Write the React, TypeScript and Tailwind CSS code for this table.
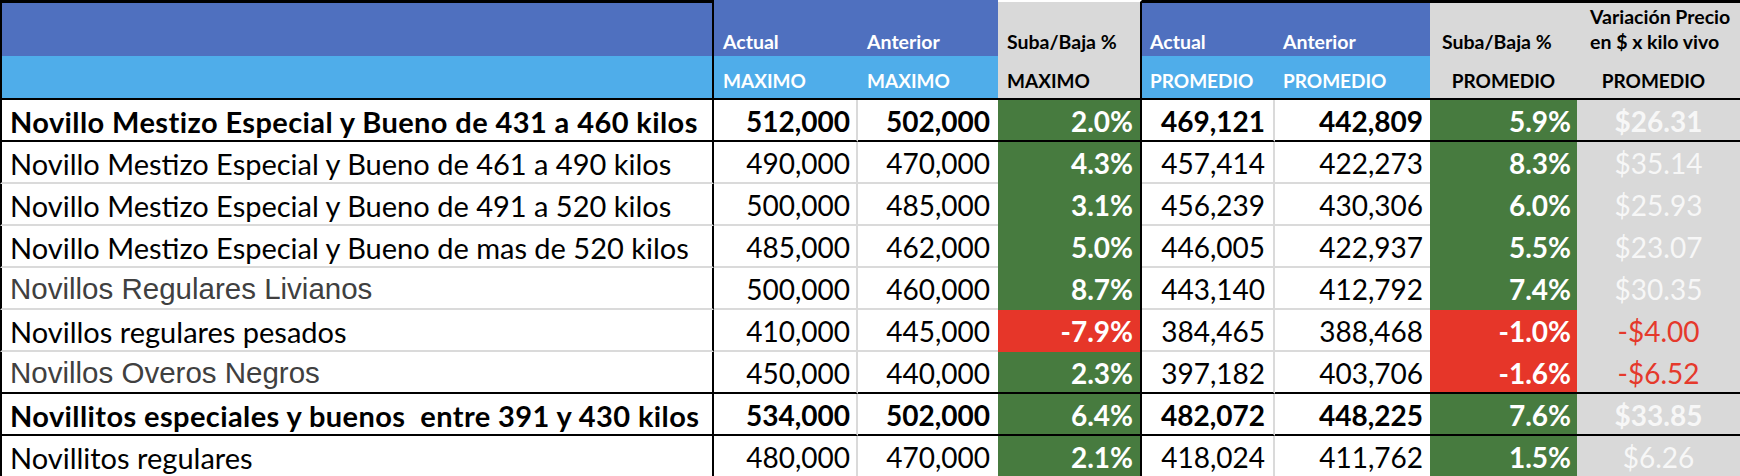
import React from 'react';

type Row = {
  label: string;
  bold?: boolean;
  arial?: boolean;
  maxAct: string;
  maxAnt: string;
  maxPct: string;
  promAct: string;
  promAnt: string;
  promPct: string;
  vari: string;
  sep: 'black' | 'gray';
};

const rows: Row[] = [
  { label: 'Novillo Mestizo Especial y Bueno de 431 a 460 kilos', bold: true, maxAct: '512,000', maxAnt: '502,000', maxPct: '2.0%', promAct: '469,121', promAnt: '442,809', promPct: '5.9%', vari: '$26.31', sep: 'black' },
  { label: 'Novillo Mestizo Especial y Bueno de 461 a 490 kilos', maxAct: '490,000', maxAnt: '470,000', maxPct: '4.3%', promAct: '457,414', promAnt: '422,273', promPct: '8.3%', vari: '$35.14', sep: 'gray' },
  { label: 'Novillo Mestizo Especial y Bueno de 491 a 520 kilos', maxAct: '500,000', maxAnt: '485,000', maxPct: '3.1%', promAct: '456,239', promAnt: '430,306', promPct: '6.0%', vari: '$25.93', sep: 'gray' },
  { label: 'Novillo Mestizo Especial y Bueno de mas de 520 kilos', maxAct: '485,000', maxAnt: '462,000', maxPct: '5.0%', promAct: '446,005', promAnt: '422,937', promPct: '5.5%', vari: '$23.07', sep: 'gray' },
  { label: 'Novillos Regulares Livianos', arial: true, maxAct: '500,000', maxAnt: '460,000', maxPct: '8.7%', promAct: '443,140', promAnt: '412,792', promPct: '7.4%', vari: '$30.35', sep: 'gray' },
  { label: 'Novillos regulares pesados', maxAct: '410,000', maxAnt: '445,000', maxPct: '-7.9%', promAct: '384,465', promAnt: '388,468', promPct: '-1.0%', vari: '-$4.00', sep: 'gray' },
  { label: 'Novillos Overos Negros', arial: true, maxAct: '450,000', maxAnt: '440,000', maxPct: '2.3%', promAct: '397,182', promAnt: '403,706', promPct: '-1.6%', vari: '-$6.52', sep: 'black' },
  { label: 'Novillitos especiales y buenos  entre 391 y 430 kilos', bold: true, maxAct: '534,000', maxAnt: '502,000', maxPct: '6.4%', promAct: '482,072', promAnt: '448,225', promPct: '7.6%', vari: '$33.85', sep: 'black' },
  { label: 'Novillitos regulares', maxAct: '480,000', maxAnt: '470,000', maxPct: '2.1%', promAct: '418,024', promAnt: '411,762', promPct: '1.5%', vari: '$6.26', sep: 'gray' },
];

const grid = 'grid grid-cols-[714px_144px_140px_144px_133px_155px_147px_163px]';

function PctCell({ value, sep, last }: { value: string; sep: string; last?: boolean }) {
  const neg = value.startsWith('-');
  return (
    <div
      className={`flex items-center justify-end border-b-2 pt-[2px] font-bold text-white ${
        neg ? 'bg-[#e63629]' : 'bg-[#477b3f]'
      } ${sep === 'black' ? 'border-black' : 'border-transparent'} ${last ? 'pr-[6px]' : 'pr-[7px]'}`}
    >
      {value}
    </div>
  );
}

export default function App() {
  return (
    <div className="h-[476px] w-[1740px] overflow-hidden bg-white font-['Lato',sans-serif]">
      {/* header, first band */}
      <div className={`${grid} h-[56px] text-[19.5px] font-bold leading-[25px]`}>
        <div className="border-x-2 border-t-[3px] border-black bg-[#4f70bf]" />
        <div className="flex items-end bg-[#4f70bf] pb-[2px] pl-[9px] text-white">Actual</div>
        <div className="flex items-end bg-[#4f70bf] pb-[2px] pl-[9px] text-white">Anterior</div>
        <div className="flex items-end border-r-2 border-t-2 border-r-black border-t-white bg-[#d9d9d9] pb-[2px] pl-[9px] text-black">
          Suba/Baja %
        </div>
        <div className="flex items-end border-t-[3px] border-black bg-[#4f70bf] pb-[2px] pl-[8px] text-white">Actual</div>
        <div className="flex items-end border-t-[3px] border-black bg-[#4f70bf] pb-[2px] pl-[8px] text-white">Anterior</div>
        <div className="flex items-end border-t-[3px] border-black bg-[#d9d9d9] pb-[2px] pl-[12px] text-black">Suba/Baja %</div>
        <div className="flex flex-col justify-end border-t-[3px] border-black bg-[#d9d9d9] pb-[2px] pl-[13px] text-black">
          <span>Variación Precio</span>
          <span>en $ x kilo vivo</span>
        </div>
      </div>

      {/* header, second band */}
      <div className={`${grid} h-[44px] text-[19px] font-bold`}>
        <div className="border-x-2 border-b-2 border-black bg-[#4fadea]" />
        <div className="flex items-end border-b-2 border-black bg-[#4fadea] pb-[3px] pl-[9px] text-white">MAXIMO</div>
        <div className="flex items-end border-b-2 border-black bg-[#4fadea] pb-[3px] pl-[9px] text-white">MAXIMO</div>
        <div className="flex items-end border-b-2 border-r-2 border-black bg-[#d9d9d9] pb-[3px] pl-[9px] text-black">MAXIMO</div>
        <div className="flex items-end border-b-2 border-black bg-[#4fadea] pb-[3px] pl-[8px] text-white">PROMEDIO</div>
        <div className="flex items-end border-b-2 border-black bg-[#4fadea] pb-[3px] pl-[8px] text-white">PROMEDIO</div>
        <div className="flex items-end justify-center border-b-2 border-black bg-[#d9d9d9] pb-[3px] text-black">PROMEDIO</div>
        <div className="flex items-end justify-center border-b-2 border-black bg-[#d9d9d9] pb-[3px] pr-[10px] text-black">
          PROMEDIO
        </div>
      </div>

      {/* body */}
      {rows.map((r) => {
        const line = r.sep === 'black' ? 'border-black' : 'border-[#dadada]';
        const weight = r.bold ? 'font-bold' : 'font-normal';
        const neg = r.vari.startsWith('-');
        const labelStyle = r.arial
          ? "font-['Liberation_Sans',Arial,sans-serif] text-[29.5px] text-[#404040]"
          : r.bold
            ? 'text-[29px] font-bold tracking-[0.4px]'
            : 'text-[29px] font-normal';
        return (
          <div key={r.label} className={`${grid} h-[42px] text-[28px] leading-none text-black`}>
            <div
              className={`flex items-center whitespace-pre border-b-2 border-l-2 border-r-2 border-l-black border-r-black pl-[8px] pt-[2px] ${
                r.sep === 'black' ? 'border-b-black' : 'border-b-[#dadada]'
              } ${labelStyle}`}
            >
              {r.label}
            </div>
            <div className={`flex items-center justify-end border-b-2 border-r-2 border-r-[#dadada] pr-[6px] pt-[2px] ${line} ${weight}`}>
              {r.maxAct}
            </div>
            <div className={`flex items-center justify-end border-b-2 pr-[8px] pt-[2px] ${line} ${weight}`}>{r.maxAnt}</div>
            <div className="grid border-r-2 border-black">
              <PctCell value={r.maxPct} sep={r.sep} />
            </div>
            <div className={`flex items-center justify-end border-b-2 border-r-2 border-r-[#dadada] pr-[8px] pt-[2px] ${line} ${weight}`}>
              {r.promAct}
            </div>
            <div className={`flex items-center justify-end border-b-2 pr-[7px] pt-[2px] ${line} ${weight}`}>{r.promAnt}</div>
            <PctCell value={r.promPct} sep={r.sep} last />
            <div
              className={`flex items-center justify-center border-b-2 bg-[#d9d9d9] pt-[2px] ${
                r.sep === 'black' ? 'border-black' : 'border-transparent'
              } ${neg ? 'text-[#e5392c]' : 'text-[#f7f7f7]'} ${weight}`}
            >
              {r.vari}
            </div>
          </div>
        );
      })}
    </div>
  );
}
